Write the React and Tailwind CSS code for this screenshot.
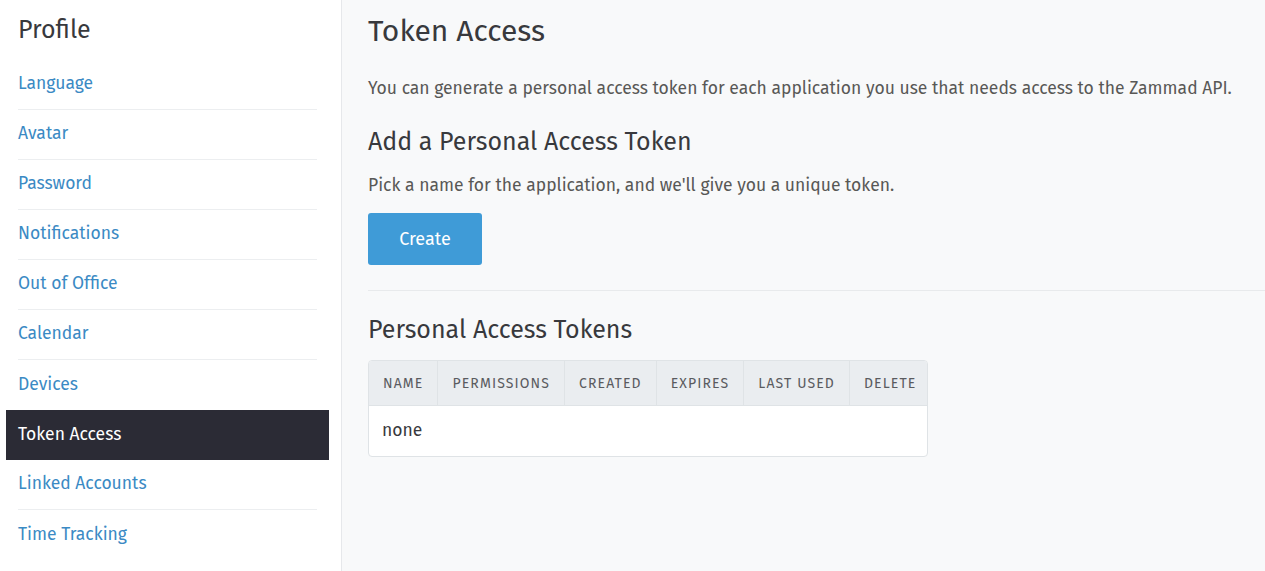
const NAV = [
  "Language",
  "Avatar",
  "Password",
  "Notifications",
  "Out of Office",
  "Calendar",
  "Devices",
  "Token Access",
  "Linked Accounts",
  "Time Tracking",
];

const ACTIVE = "Token Access";

const COLUMNS = ["Name", "Permissions", "Created", "Expires", "Last used", "Delete"];

export default function App() {
  return (
    <div
      className="flex min-h-[571px] bg-[#f8f9fa] text-[#38393d]"
      style={{ fontFamily: '"Fira Sans", "Open Sans", sans-serif' }}
    >
      {/* sidebar */}
      <aside className="w-[342px] shrink-0 bg-white border-r border-[#e6e8eb] pl-[6px] pr-[12px]">
        <h1 className="h-[60px] pl-3 pt-[15px] text-[25px] leading-[30px] text-[#38393d]">Profile</h1>
        <ul>
          {NAV.map((item, i) => {
            const active = item === ACTIVE;
            const last = i === NAV.length - 1;
            const nextActive = NAV[i + 1] === ACTIVE;
            return (
              <li key={item} className={active ? "bg-[#2b2b35]" : ""}>
                <div
                  className={
                    "mx-3 h-[50px] flex items-center text-[17.5px] " +
                    (active ? "text-white" : "text-[#3b8ac4]") +
                    (!active && !last && !nextActive ? " border-b border-[#eceef0]" : "")
                  }
                >
                  {item}
                </div>
              </li>
            );
          })}
        </ul>
      </aside>

      {/* main */}
      <main className="flex-1 pl-[26px]">
        <h2 className="pt-[15px] text-[30px] leading-[33px] text-[#38393d]">Token Access</h2>
        <p className="mt-[29px] text-[17.5px] leading-[24px] text-[#585856]">
          You can generate a personal access token for each application you use that needs access to the Zammad API.
        </p>

        <h3 className="mt-[26px] text-[25px] leading-[30px] text-[#38393d]">Add a Personal Access Token</h3>
        <p className="mt-[17px] text-[17.5px] leading-[24px] text-[#585856]">
          Pick a name for the application, and we'll give you a unique token.
        </p>
        <button className="mt-[15px] w-[114px] h-[52px] rounded-[3px] bg-[#3f9bd7] text-white text-[18px]">
          Create
        </button>

        <div className="mt-[25px] border-t border-[#e8eaec]" />

        <h3 className="mt-[24px] text-[25px] leading-[30px] text-[#38393d]">Personal Access Tokens</h3>

        <div className="mt-[15px] w-[560px] rounded-[4px] border border-[#dfe3e6] overflow-hidden bg-white">
          <div className="flex h-[45px] bg-[#eaedf0] border-b border-[#dfe3e6]">
            {COLUMNS.map((c, i) => (
              <div
                key={c}
                className={
                  "px-[14px] flex items-center whitespace-nowrap uppercase tracking-[0.08em] text-[14px] text-[#5a5b5f]" +
                  (i < COLUMNS.length - 1 ? " shrink-0 border-r border-[#dfe3e6]" : " flex-1")
                }
              >
                {c}
              </div>
            ))}
          </div>
          <div className="h-[50px] px-[13px] flex items-center text-[17.5px] text-[#38393d]">none</div>
        </div>
      </main>
    </div>
  );
}
